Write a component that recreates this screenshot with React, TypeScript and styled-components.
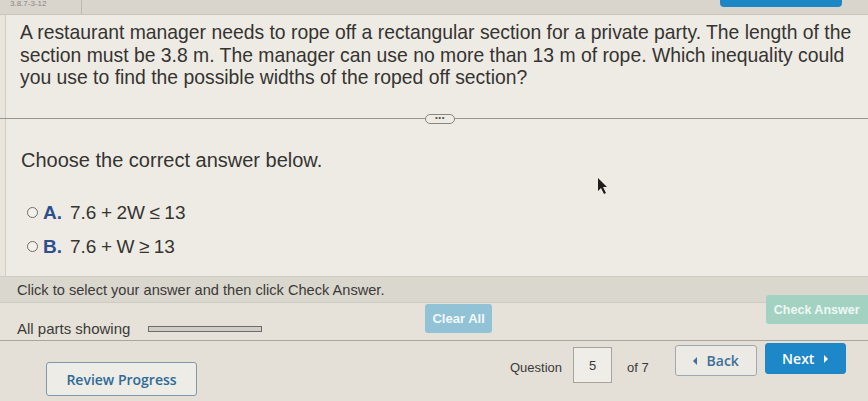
import React from "react";
import styled, { createGlobalStyle } from "styled-components";

const Global = createGlobalStyle`
  html, body { margin: 0; padding: 0; }
  body {
    width: 868px; height: 401px; overflow: hidden;
    background: #e8e4dc;
    font-family: "Liberation Sans", Arial, sans-serif;
    color: #373633;
  }
`;

const Page = styled.div`
  position: relative;
  width: 868px;
  height: 401px;
  display: flex;
  flex-direction: column;
  background: #e9e5dd;
`;

const TopStrip = styled.div`
  height: 14px;
  display: flex;
  align-items: flex-start;
  background: #d9d5cd;
  border-bottom: 1px solid #c9c5bc;
`;

const Tab = styled.div`
  width: 82px;
  height: 14px;
  border-right: 1px solid #bfbab1;
  font-size: 8px;
  line-height: 8px;
  color: #8a867f;
  padding-left: 10px;
  box-sizing: border-box;
`;

const TopButton = styled.div`
  margin-left: 638px;
  width: 122px;
  height: 7px;
  background: #1b87c4;
  border-radius: 0 0 4px 4px;
`;

const Panel = styled.div`
  margin-left: 5px;
  border-left: 1px solid #d2cec6;
  background: #eeebe5;
  height: 261px;
  display: flex;
  flex-direction: column;
`;

const Question = styled.p`
  margin: 0;
  padding: 6px 0 0 14px;
  font-size: 19.35px;
  line-height: 22.5px;
  color: #353431;
  white-space: nowrap;
`;

const Divider = styled.div`
  position: relative;
  margin: 29px 0 0 -6px;
  height: 1px;
  background: #9a968f;
  width: 874px;
`;

const Dots = styled.div`
  position: absolute;
  left: 425px;
  top: -4px;
  width: 28px;
  height: 8px;
  border: 1px solid #8a867f;
  border-radius: 5px;
  background: #eeebe5;
  font-size: 8px;
  line-height: 5px;
  text-align: center;
  color: #555;
  letter-spacing: 0.5px;
`;

const Prompt = styled.div`
  margin: 30px 0 0 15px;
  font-size: 20px;
  line-height: 23px;
  color: #353431;
`;

const Options = styled.div`
  margin: 31px 0 0 21px;
  display: flex;
  flex-direction: column;
  gap: 14px;
`;

const Option = styled.div`
  display: flex;
  align-items: center;
  font-size: 19px;
  height: 20px;
`;

const Radio = styled.span`
  width: 9px;
  height: 9px;
  border: 1px solid #6f6c67;
  border-radius: 50%;
  margin-right: 5px;
  background: #f3f1ec;
`;

const Letter = styled.span`
  color: #2d4f8b;
  font-weight: bold;
  margin-right: 8px;
`;

const Expr = styled.span`
  color: #353431;
  word-spacing: -0.8px;
`;

const Cursor = styled.svg`
  position: absolute;
  left: 597px;
  top: 177px;
`;

const InstructionBar = styled.div`
  height: 25px;
  background: #dad7cf;
  border-top: 1px solid #cfcbc3;
  border-bottom: 1px solid #cfcbc3;
  display: flex;
  align-items: center;
  padding-left: 17px;
  font-size: 14.6px;
  color: #3b3a37;
`;

const ActionRow = styled.div`
  height: 37px;
  display: flex;
  align-items: flex-start;
  border-bottom: 1px solid #a9a59d;
  background: #e6e2da;
`;

const Status = styled.div`
  margin: 17px 0 0 17px;
  display: flex;
  align-items: center;
  font-size: 15px;
  color: #3b3a37;
  white-space: nowrap;
`;

const ProgressBar = styled.div`
  margin-left: 18px;
  width: 112px;
  height: 4px;
  border: 1px solid #6f6c67;
  background: #cfcdc8;
`;

const ClearButton = styled.div`
  margin: 1px 0 0 163px;
  width: 72px;
  height: 29px;
  border-radius: 3px;
  background: #92c2d6;
  color: #f2f8fb;
  font-size: 13px;
  font-weight: bold;
  display: flex;
  align-items: center;
  justify-content: center;
`;

const CheckButton = styled.div`
  margin: -8px 0 0 274px;
  width: 110px;
  height: 29px;
  border-radius: 3px 0 0 3px;
  background: #a3d2c3;
  color: #eef8f4;
  font-size: 12.5px;
  font-weight: bold;
  display: flex;
  align-items: center;
  padding-left: 8px;
  box-sizing: border-box;
`;

const Footer = styled.div`
  flex: 1;
  display: flex;
  align-items: flex-start;
  background: #e4e0d8;
`;

const ReviewButton = styled.div`
  margin: 21px 0 0 46px;
  width: 151px;
  height: 34px;
  box-sizing: border-box;
  border: 1px solid #7f98aa;
  border-radius: 3px;
  background: #eeece7;
  color: #2e6a98;
  font-family: "Open Sans", sans-serif;
  font-size: 14px;
  font-weight: 600;
  display: flex;
  align-items: center;
  justify-content: center;
`;

const Nav = styled.div`
  margin-left: 313px;
  display: flex;
  align-items: flex-start;
`;

const NavLabel = styled.span`
  margin-top: 19px;
  font-size: 13px;
  color: #3b3a37;
`;

const NumberBox = styled.div`
  margin: 6px 15px 0 11px;
  width: 39px;
  height: 36px;
  box-sizing: border-box;
  border: 1px solid #a6a39d;
  background: #efede8;
  font-size: 13px;
  display: flex;
  align-items: center;
  justify-content: center;
  color: #3b3a37;
`;

const NavButton = styled.div<{ $primary?: boolean }>`
  margin-top: ${(p) => (p.$primary ? "2px" : "4px")};
  margin-left: ${(p) => (p.$primary ? "8px" : "26px")};
  width: ${(p) => (p.$primary ? "81px" : "82px")};
  height: 31px;
  box-sizing: border-box;
  border-radius: 3px;
  border: 1px solid ${(p) => (p.$primary ? "#1c86c6" : "#9ea8ae")};
  background: ${(p) => (p.$primary ? "#1d87c8" : "#eceae5")};
  color: ${(p) => (p.$primary ? "#ffffff" : "#3d6f98")};
  font-family: "Open Sans", sans-serif;
  font-size: 14px;
  font-weight: 600;
  display: flex;
  align-items: center;
  justify-content: center;
  gap: 10px;
`;

const Tri = styled.span<{ $dir: "left" | "right" }>`
  width: 0;
  height: 0;
  border-top: 4px solid transparent;
  border-bottom: 4px solid transparent;
  ${(p) =>
    p.$dir === "left"
      ? "border-right: 4px solid currentColor;"
      : "border-left: 4px solid currentColor;"}
`;

export default function App() {
  return (
    <>
      <Global />
      <Page>
        <TopStrip>
          <Tab>3.8.7-3-12</Tab>
          <TopButton />
        </TopStrip>
        <Panel>
          <Question>
            A restaurant manager needs to rope off a rectangular section for a private party. The length of the
            <br />
            section must be 3.8 m. The manager can use no more than 13 m of rope. Which inequality could
            <br />
            you use to find the possible widths of the roped off section?
          </Question>
          <Divider>
            <Dots>•••</Dots>
          </Divider>
          <Prompt>Choose the correct answer below.</Prompt>
          <Options>
            <Option>
              <Radio />
              <Letter>A.</Letter>
              <Expr>7.6 + 2W ≤ 13</Expr>
            </Option>
            <Option>
              <Radio />
              <Letter>B.</Letter>
              <Expr>7.6 + W ≥ 13</Expr>
            </Option>
          </Options>
        </Panel>
        <Cursor width="12" height="18" viewBox="0 0 12 18">
          <path d="M1 1 L1 14 L4 11 L7 17 L9 16 L6 10 L10 10 Z" fill="#1e1e1e" />
        </Cursor>
        <InstructionBar>Click to select your answer and then click Check Answer.</InstructionBar>
        <ActionRow>
          <Status>
            All parts showing
            <ProgressBar />
          </Status>
          <ClearButton>Clear All</ClearButton>
          <CheckButton>Check Answer</CheckButton>
        </ActionRow>
        <Footer>
          <ReviewButton>Review Progress</ReviewButton>
          <Nav>
            <NavLabel>Question</NavLabel>
            <NumberBox>5</NumberBox>
            <NavLabel>of 7</NavLabel>
            <NavButton>
              <Tri $dir="left" />
              Back
            </NavButton>
            <NavButton $primary>
              Next
              <Tri $dir="right" />
            </NavButton>
          </Nav>
        </Footer>
      </Page>
    </>
  );
}
